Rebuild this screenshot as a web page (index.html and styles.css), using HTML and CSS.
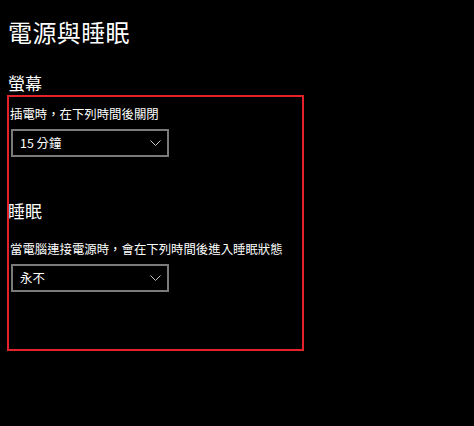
FILE: index.html
```html
<!DOCTYPE html>
<html lang="zh-Hant">
<head>
<meta charset="utf-8">
<title>電源與睡眠</title>
<link rel="stylesheet" href="styles.css">
</head>
<body>
<main class="page">
  <h1 class="title">電源與睡眠</h1>
  <h2 class="section section-screen">螢幕</h2>
  <p class="label label-first">插電時，在下列時間後關閉</p>
  <div class="select">
    <span class="select-value">15 分鐘</span>
    <svg class="chevron" width="11" height="6" viewBox="0 0 11 6"><path d="M0.5 0.5 L5.5 5.5 L10.5 0.5" fill="none" stroke="#c8c8c8" stroke-width="1"/></svg>
  </div>
  <h2 class="section section-sleep">睡眠</h2>
  <p class="label label-second">當電腦連接電源時，會在下列時間後進入睡眠狀態</p>
  <div class="select">
    <span class="select-value">永不</span>
    <svg class="chevron" width="11" height="6" viewBox="0 0 11 6"><path d="M0.5 0.5 L5.5 5.5 L10.5 0.5" fill="none" stroke="#c8c8c8" stroke-width="1"/></svg>
  </div>
  <div class="highlight"></div>
</main>
</body>
</html>
```
FILE: styles.css
```css
html, body {
  margin: 0;
  padding: 0;
  background: #000;
}
body {
  width: 474px;
  height: 426px;
  overflow: hidden;
  color: #fff;
  font-family: "Noto Sans CJK TC", "Noto Sans", sans-serif;
}
.page {
  position: relative;
  display: flex;
  flex-direction: column;
  align-items: flex-start;
  padding: 16px 0 0 8px;
}
.title {
  margin: 0;
  font-size: 24px;
  line-height: 32px;
  font-weight: 400;
  letter-spacing: 0.4px;
}
.section {
  margin: 0;
  font-size: 17px;
  line-height: 24px;
  font-weight: 400;
}
.section-screen { margin-top: 23px; }
.section-sleep { margin-top: 42px; }
.label {
  margin: 0;
  font-size: 12.4px;
  line-height: 18px;
  padding-left: 2px;
}
.label-first { margin-top: 10px; }
.label-second { margin-top: 17px; }
.select {
  box-sizing: border-box;
  margin-top: 6px;
  margin-left: 3px;
  width: 158px;
  height: 28px;
  border: 2px solid #7a7a7a;
  display: flex;
  align-items: center;
  justify-content: space-between;
  padding: 0 6px 0 7px;
}
.select-value {
  font-size: 12.4px;
  line-height: 18px;
}
.chevron {
  display: block;
}
.highlight {
  position: absolute;
  left: 7px;
  top: 95px;
  width: 297px;
  height: 256px;
  box-sizing: border-box;
  border: 2px solid #e3222b;
  pointer-events: none;
}
```
